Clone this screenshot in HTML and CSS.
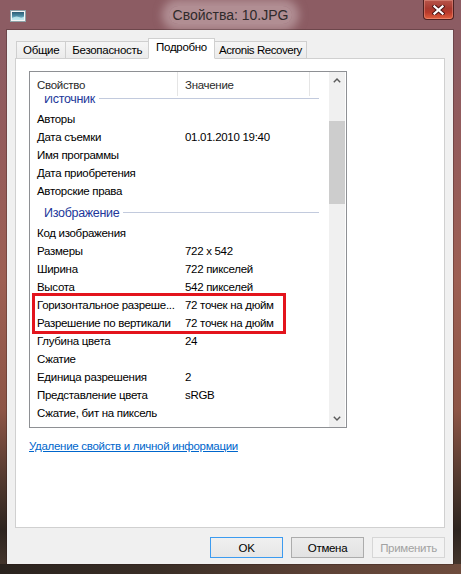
FILE: index.html
```html
<!DOCTYPE html>
<html lang="ru">
<head>
<meta charset="utf-8">
<title>Свойства: 10.JPG</title>
<link rel="stylesheet" href="styles.css">
</head>
<body>
<div class="window">
  <div class="titlebar">
    <div class="tb-left">
      <svg class="app-icon" width="16" height="12" viewBox="0 0 16 12">
        <defs>
          <linearGradient id="pic" x1="0" y1="0" x2="0" y2="1">
            <stop offset="0" stop-color="#2a5c74"/>
            <stop offset="0.5" stop-color="#4f90a8"/>
            <stop offset="1" stop-color="#a8e0ea"/>
          </linearGradient>
        </defs>
        <rect x="0.5" y="0.5" width="15" height="11" fill="#f4f6f6" stroke="#8da2a8"/>
        <rect x="2" y="2" width="12" height="8" fill="url(#pic)"/>
        <path d="M2 8 Q6 5.5 9 7 T14 6.5 V10 H2 Z" fill="#c9eef2" opacity="0.8"/>
      </svg>
    </div>
    <div class="title"><span class="title-glow">Свойства: 10.JPG</span></div>
    <div class="tb-right">
      <button class="close" type="button" aria-label="Закрыть">
        <svg width="13" height="10" viewBox="0 0 13 10">
          <path d="M2.5 1.5 L10.5 8.5 M10.5 1.5 L2.5 8.5" stroke="#4a1414" stroke-width="4.2" stroke-linecap="square" fill="none"/>
          <path d="M2.5 1.5 L10.5 8.5 M10.5 1.5 L2.5 8.5" stroke="#ffffff" stroke-width="2.3" stroke-linecap="square" fill="none"/>
        </svg>
      </button>
    </div>
  </div>

  <div class="client">
    <div class="tabs">
      <div class="tab">Общие</div>
      <div class="tab">Безопасность</div>
      <div class="tab active">Подробно</div>
      <div class="tab tab-latin">Acronis Recovery</div>
    </div>

    <div class="panel">
      <div class="listbox">
        <div class="list-main">
          <div class="list-header">
            <div class="hcell c-name">Свойство</div>
            <div class="hcell c-value">Значение</div>
            <div class="hcell c-fill"></div>
          </div>
          <div class="list-view">
            <div class="list-content">
              <div class="group"><span>Источник</span><i class="rule"></i></div>
              <div class="row"><span class="name">Авторы</span><span class="value"></span></div>
              <div class="row"><span class="name">Дата съемки</span><span class="value">01.01.2010 19:40</span></div>
              <div class="row"><span class="name">Имя программы</span><span class="value"></span></div>
              <div class="row"><span class="name">Дата приобретения</span><span class="value"></span></div>
              <div class="row"><span class="name">Авторские права</span><span class="value"></span></div>
              <div class="group"><span>Изображение</span><i class="rule"></i></div>
              <div class="row"><span class="name">Код изображения</span><span class="value"></span></div>
              <div class="row"><span class="name">Размеры</span><span class="value">722 x 542</span></div>
              <div class="row"><span class="name">Ширина</span><span class="value">722 пикселей</span></div>
              <div class="row"><span class="name">Высота</span><span class="value">542 пикселей</span></div>
              <div class="row"><span class="name">Горизонтальное разреше...</span><span class="value">72 точек на дюйм</span></div>
              <div class="row"><span class="name">Разрешение по вертикали</span><span class="value">72 точек на дюйм</span></div>
              <div class="row"><span class="name">Глубина цвета</span><span class="value">24</span></div>
              <div class="row"><span class="name">Сжатие</span><span class="value"></span></div>
              <div class="row"><span class="name">Единица разрешения</span><span class="value">2</span></div>
              <div class="row"><span class="name">Представление цвета</span><span class="value">sRGB</span></div>
              <div class="row"><span class="name">Сжатие, бит на пиксель</span><span class="value"></span></div>
            </div>
          </div>
        </div>
        <div class="scrollbar">
          <div class="sb-btn">
            <svg width="8" height="5" viewBox="0 0 8 5"><path d="M0.8 4.3 L4 1 L7.2 4.3" fill="none" stroke="#5a5a5a" stroke-width="1.4"/></svg>
          </div>
          <div class="sb-track"><div class="sb-thumb"></div></div>
          <div class="sb-btn">
            <svg width="8" height="5" viewBox="0 0 8 5"><path d="M0.8 0.7 L4 4 L7.2 0.7" fill="none" stroke="#5a5a5a" stroke-width="1.4"/></svg>
          </div>
        </div>
        <div class="highlight"></div>
      </div>
      <a class="link" href="#">Удаление свойств и личной информации</a>
    </div>

    <div class="buttons">
      <button class="btn default" type="button">OK</button>
      <button class="btn" type="button">Отмена</button>
      <button class="btn" type="button" disabled>Применить</button>
    </div>
  </div>
</div>
</body>
</html>
```

FILE: styles.css
```css
html, body {
  margin: 0;
  padding: 0;
}

body {
  font-family: "Liberation Sans", Arial, sans-serif;
  font-size: 11.5px;
  letter-spacing: -0.3px;
  color: #000;
  background: #2e2620;
}

.window {
  width: 461px;
  height: 574px;
  box-sizing: border-box;
  display: flex;
  flex-direction: column;
  background:
    linear-gradient(to right, #2a231e 0, #3a2e26 35%, #5d4236 70%, #6e4c3d 100%) left bottom / 100% 10px no-repeat,
    linear-gradient(to bottom, #8c5c63 0, #8c5c63 45px, #935b5c 130px, #9d5f53 280px, #8d5546 410px, #4e372d 485px, #2d241f 530px, #4a3a30 574px);
}

/* Title bar */
.titlebar {
  height: 30px;
  flex: none;
  display: grid;
  grid-template-columns: 1fr auto 1fr;
  align-items: center;
}

.app-icon {
  display: block;
  margin-left: 10px;
  margin-top: 1px;
}

.title {
  font-size: 14px;
  letter-spacing: 0;
  color: #2f2a2b;
}

.title-glow {
  display: inline-block;
  padding: 1px 4px;
  border-radius: 10px;
  background: rgba(214, 192, 196, 0.5);
  box-shadow: 0 0 9px 7px rgba(214, 192, 196, 0.5);
}

.tb-right {
  justify-self: end;
  align-self: start;
}

.close {
  display: flex;
  align-items: center;
  justify-content: center;
  width: 31px;
  height: 20px;
  margin-right: 7px;
  padding: 0;
  box-sizing: border-box;
  border: 1px solid #4c2020;
  border-top: none;
  border-radius: 0 0 4px 4px;
  background: linear-gradient(to bottom, #b8554a 0, #a6392f 45%, #b9392a 65%, #e0603f 100%);
  box-shadow: inset 0 0 0 1px rgba(255, 190, 175, 0.35);
}

/* Client area */
.client {
  flex: 1;
  margin: 0 8px 10px 7px;
  padding: 8px 8px 6px;
  box-sizing: border-box;
  display: flex;
  flex-direction: column;
  background: #f0f0f0;
  box-shadow: 0 0 0 1px rgba(40, 20, 20, 0.3);
}

/* Tabs */
.tabs {
  display: flex;
  align-items: flex-end;
  height: 21px;
  flex: none;
  margin-bottom: -1px;
  padding-left: 1px;
}

.tab {
  height: 18px;
  box-sizing: border-box;
  display: flex;
  align-items: center;
  padding: 0 6px 1px;
  margin-left: -1px;
  border: 1px solid #cfcfcf;
  background: linear-gradient(to bottom, #f5f5f5, #ebebeb);
  white-space: nowrap;
}

.tab:first-child {
  margin-left: 0;
}

.tab.active {
  height: 21px;
  padding: 0 7px 3px;
  background: #fff;
  border-color: #d0d0d0;
  border-bottom-color: #fff;
  position: relative;
  z-index: 1;
}

.tab-latin {
  padding: 0 4px 1px;
  letter-spacing: -0.45px;
}

/* Tab panel */
.panel {
  flex: 1;
  display: flex;
  flex-direction: column;
  align-items: flex-start;
  padding: 12px 13px 0;
  background: #fff;
  border: 1px solid #d0d0d0;
}

/* List view */
.listbox {
  position: relative;
  display: flex;
  width: 318px;
  height: 357px;
  box-sizing: border-box;
  padding-right: 1px;
  border: 1px solid #8e9094;
  background: #fff;
}

.list-main {
  flex: 1;
  min-width: 0;
  display: flex;
  flex-direction: column;
}

.list-header {
  display: flex;
  height: 24px;
  flex: none;
  position: relative;
  z-index: 1;
  background: #fff;
}

.hcell {
  display: flex;
  align-items: center;
  box-sizing: border-box;
  padding-left: 7px;
  padding-top: 1px;
  border-right: 1px solid #e5e5e5;
  color: #2a2a2a;
}

.c-name {
  width: 148px;
}

.c-value {
  width: 132px;
}

.c-fill {
  flex: 1;
  border-right: none;
}

.list-view {
  flex: 1;
  overflow: hidden;
}

.list-content {
  margin-top: -10px;
}

.row {
  display: flex;
  align-items: center;
  height: 18px;
}

.row .name {
  width: 148px;
  box-sizing: border-box;
  padding-left: 7px;
  white-space: nowrap;
  overflow: hidden;
}

.row .value {
  padding-left: 7px;
  white-space: nowrap;
}

.group {
  display: flex;
  align-items: center;
  gap: 4px;
  height: 24px;
  padding: 1px 10px 0 14px;
  box-sizing: border-box;
  font-size: 12.5px;
  color: #22379a;
}

.group .rule {
  flex: 1;
  height: 1px;
  margin-top: -1px;
  background: #c2cadd;
}

/* Scrollbar */
.scrollbar {
  width: 16px;
  flex: none;
  display: flex;
  flex-direction: column;
  background: #f0f0f0;
}

.sb-btn {
  height: 17px;
  flex: none;
  display: flex;
  align-items: center;
  justify-content: center;
}

.sb-track {
  flex: 1;
}

.sb-thumb {
  height: 83px;
  margin-top: 32px;
  background: #cdcdcd;
}

/* Annotation frame */
.highlight {
  position: absolute;
  left: 2px;
  top: 221px;
  width: 254px;
  height: 41px;
  box-sizing: border-box;
  border: 3px solid #e3141c;
  z-index: 2;
}

.link {
  margin-top: 12px;
  color: #0066cc;
  text-decoration: underline;
}

/* Dialog buttons */
.buttons {
  display: flex;
  justify-content: flex-end;
  gap: 8px;
  height: 21px;
  flex: none;
  margin-top: 9px;
}

.btn {
  width: 73px;
  height: 21px;
  box-sizing: border-box;
  padding: 0;
  font: inherit;
  letter-spacing: inherit;
  color: #000;
  border: 1px solid #acacac;
  background: linear-gradient(to bottom, #ececec, #e2e2e2);
}

.btn.default {
  border-color: #3c9bf0;
  background: linear-gradient(to bottom, #f0f0f0, #e6e6e6);
}

.btn:disabled {
  color: #a2a2a2;
  border-color: #d6d6d6;
  background: #f3f3f3;
}
```
